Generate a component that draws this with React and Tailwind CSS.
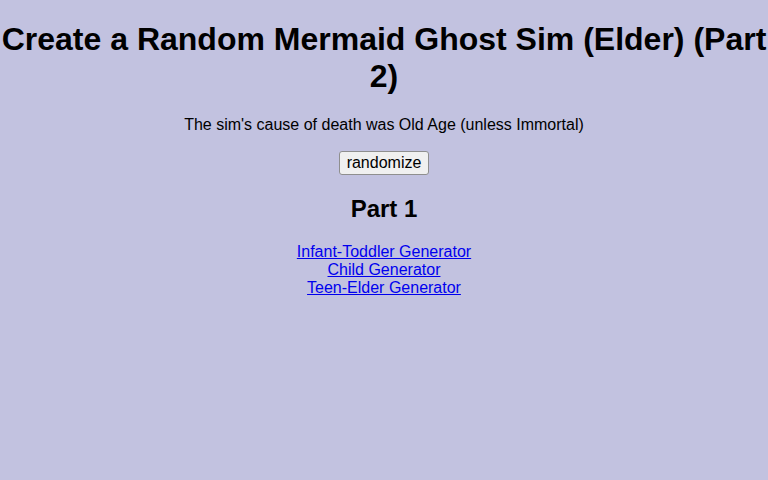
export default function App() {
  const links = ["Infant-Toddler Generator", "Child Generator", "Teen-Elder Generator"]

  return (
    <div className="min-h-[480px] bg-[#c2c2e0] text-center text-black font-['Liberation_Sans',Arial,sans-serif] text-base leading-[normal] py-[0.1px]">
      <h1 className="text-[32px] font-bold mt-[20.5px] mb-[21.44px] leading-[normal]">
        Create a Random Mermaid Ghost Sim (Elder) (Part 2)
      </h1>
      <p className="my-4">The sim's cause of death was Old Age (unless Immortal)</p>
      <p className="mt-[17px] mb-4">
        <button className="bg-[#f0f0f0] border border-[#8f8f8f] rounded-[3px] px-[7px] py-[2px] text-[16px] leading-[normal] text-black">
          randomize
        </button>
      </p>
      <h2 className="text-2xl font-bold my-[19.92px] leading-[normal]">Part 1</h2>
      <div>
        {links.map((l) => (
          <div key={l}>
            <a href="#" className="text-[#0000ee] underline">{l}</a>
          </div>
        ))}
      </div>
    </div>
  )
}
